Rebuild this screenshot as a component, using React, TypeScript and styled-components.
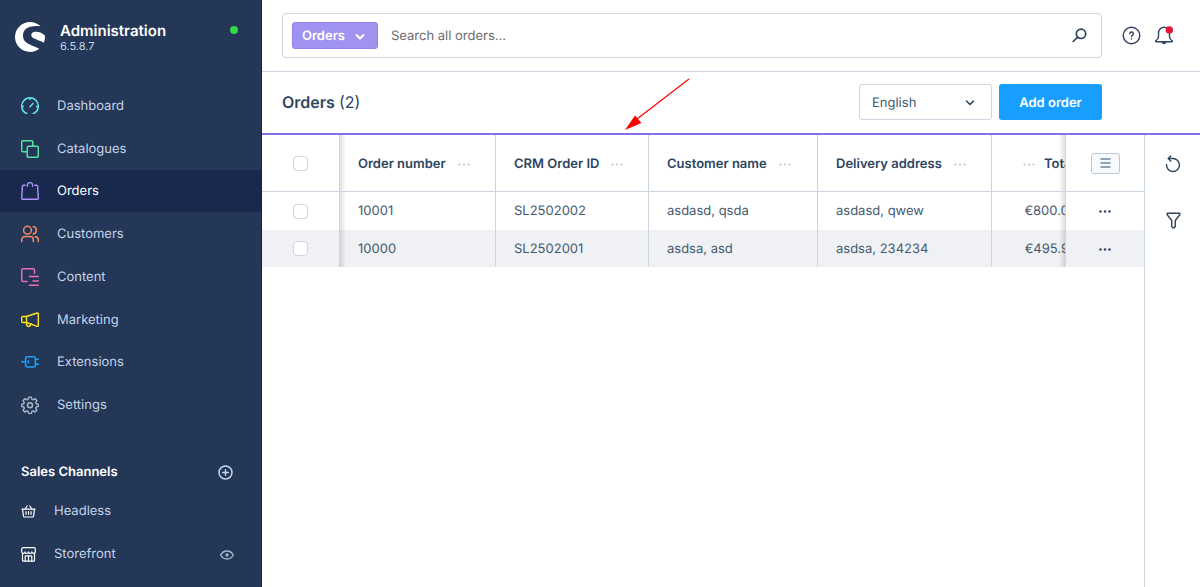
import React from "react";
import styled, { createGlobalStyle, css } from "styled-components";
import { SiShopware } from "react-icons/si";

const color = {
  nav: "#243757",
  navActive: "#19294d",
  navEdge: "#12224a",
  navText: "#c3d4ea",
  line: "#cbd6e0",
  text: "#44596f",
  heading: "#2d455f",
  purple: "#8473e8",
  blue: "#189eff",
};

const GlobalStyle = createGlobalStyle`
  *, *::before, *::after { box-sizing: border-box; }
  body {
    margin: 0;
    font-family: Inter, "Liberation Sans", sans-serif;
    font-size: 13px;
    line-height: 18px;
    color: ${color.text};
    background: #fff;
    text-rendering: geometricPrecision;
  }
  button, input, select { font: inherit; color: inherit; text-rendering: inherit; }
  button { padding: 0; border: 0; background: none; cursor: pointer; }
  ul { margin: 0; padding: 0; list-style: none; }
  h1, h2, p { margin: 0; }
  svg { display: block; flex: none; }
`;

const Shell = styled.div`
  display: grid;
  grid-template-columns: 262px minmax(0, 1fr);
  min-height: 100vh;
`;

/* ---------- navigation ---------- */

const Sidebar = styled.aside`
  display: flex;
  flex-direction: column;
  background: ${color.nav};
  border-right: 1px solid ${color.navEdge};
`;

const Brand = styled.header`
  display: flex;
  align-items: flex-start;
  height: 84px;
  padding: 22px 23px 0 15px;
  color: #fff;
`;

const BrandText = styled.div`
  flex: 1;
  margin-left: 15px;
`;

const BrandName = styled.p`
  font-size: 15px;
  font-weight: 600;
  line-height: 18px;
`;

const Version = styled.p`
  font-size: 11px;
  line-height: 13px;
  color: ${color.navText};
`;

const StatusDot = styled.span`
  width: 8px;
  height: 8px;
  margin-top: 4px;
  border-radius: 50%;
  background: #36d64a;
`;

const MainMenu = styled.ul`
  display: grid;
  grid-auto-rows: 1fr;
  height: 342px;
`;

const MenuLink = styled.a<{ $active?: boolean }>`
  display: flex;
  align-items: center;
  gap: 18px;
  height: 100%;
  padding: 1px 21px 0;
  text-decoration: none;
  color: ${(p) => (p.$active ? "#fff" : color.navText)};
  background: ${(p) => (p.$active ? color.navActive : "transparent")};
`;

const ChannelHeader = styled.div`
  display: flex;
  align-items: center;
  justify-content: space-between;
  margin-top: 37px;
  padding: 0 28px 0 21px;
  color: ${color.navText};
`;

const ChannelTitle = styled.h2`
  font-size: 13px;
  font-weight: 600;
  line-height: 18px;
  color: #fff;
`;

const ChannelList = styled.ul`
  margin-top: 8px;
`;

const ChannelItem = styled.li`
  display: flex;
  align-items: center;
  height: 43px;
  padding-right: 27px;
  color: ${color.navText};

  a {
    flex: 1;
  }
`;

/* ---------- top bar ---------- */

const Main = styled.main`
  display: flex;
  flex-direction: column;
  min-width: 0;
`;

const TopBar = styled.div`
  display: flex;
  align-items: center;
  padding: 13px 26px 13px 20px;
  border-bottom: 1px solid ${color.line};
  color: ${color.heading};
`;

const SearchBox = styled.form`
  flex: 1;
  display: flex;
  align-items: center;
  height: 45px;
  padding: 0 14px 0 9px;
  margin-right: 20px;
  border: 1px solid ${color.line};
  border-radius: 4px;
`;

const TypeButton = styled.button`
  display: flex;
  align-items: center;
  justify-content: space-between;
  width: 86px;
  height: 27px;
  padding: 0 12px 0 9px;
  border: 1px solid #9482f0;
  border-radius: 3px;
  background: #a092f0;
  color: #fff;
  font-weight: 600;
`;

const SearchInput = styled.input`
  flex: 1;
  min-width: 0;
  height: 40px;
  padding: 0 13px;
  border: 0;
  outline: 0;
  background: none;
  &::placeholder {
    color: #6b6b6b;
    opacity: 1;
  }
`;

const TopActions = styled.div`
  display: flex;
  align-items: center;
  gap: 13px;
`;

/* ---------- page header ---------- */

const PageHeader = styled.header`
  position: relative;
  display: flex;
  align-items: flex-start;
  gap: 7px;
  padding: 12px 98px 13px 20px;
  border-bottom: 2px solid ${color.purple};
`;

const PageTitle = styled.h1`
  flex: 1;
  font-size: 16px;
  line-height: 36px;
  font-weight: 600;
  color: ${color.heading};

  span {
    font-weight: 400;
  }
`;

const SelectWrap = styled.label`
  display: grid;
  align-items: center;
  width: 133px;

  > * {
    grid-area: 1 / 1;
  }
  > svg {
    justify-self: end;
    margin-right: 17px;
    pointer-events: none;
    color: ${color.heading};
  }
`;

const LanguageSelect = styled.select`
  appearance: none;
  width: 100%;
  height: 36px;
  padding: 1px 12px 0;
  border: 1px solid ${color.line};
  border-radius: 3px;
  background: #fff;
`;

const PrimaryButton = styled.button`
  width: 103px;
  height: 36px;
  padding-top: 1px;
  border-radius: 3px;
  background: ${color.blue};
  color: #fff;
  font-weight: 600;
`;

const Pointer = styled.svg`
  position: absolute;
  left: 360px;
  top: 4px;
  z-index: 3;
  pointer-events: none;
`;

/* ---------- grid ---------- */

const Content = styled.div`
  flex: 1;
  display: grid;
  grid-template-columns: minmax(0, 1fr) 56px;
`;

const GridScroller = styled.div`
  overflow-x: auto;
  scrollbar-width: none;
`;

const Grid = styled.table`
  width: 100%;
  min-width: 911px;
  table-layout: fixed;
  border-collapse: separate;
  border-spacing: 0;
`;

type CellProps = { $sticky?: "left" | "right"; $end?: boolean };

const cell = css<CellProps>`
  padding: 0 18px;
  border-right: 1px solid ${color.line};
  text-align: ${(p) => (p.$end ? "right" : "left")};
  white-space: nowrap;
  background: inherit;

  ${(p) =>
    p.$sticky &&
    css`
      position: sticky;
      ${p.$sticky}: 0;
      z-index: 1;
      padding: 0;
      ${p.$sticky === "right" &&
      css`
        border-right: 0;
        border-left: 1px solid ${color.line};
      `}

      &::after {
        content: "";
        position: absolute;
        top: 0;
        bottom: 0;
        width: 6px;
        ${p.$sticky === "left" ? "left" : "right"}: 100%;
        ${p.$sticky === "left" ? "margin-left: 1px" : "margin-right: 1px"};
        background: linear-gradient(
          to ${p.$sticky === "left" ? "right" : "left"},
          rgba(0, 0, 0, 0.12),
          transparent
        );
      }

      > * {
        display: flex;
        align-items: center;
        justify-content: center;
        margin: 0 auto;
      }
    `}
`;

const HeadCell = styled.th<CellProps>`
  ${cell}
  height: 57px;
  border-bottom: 1px solid ${color.line};
  font-weight: 600;
  color: ${color.heading};
`;

const BodyCell = styled.td<CellProps>`
  ${cell}
  height: 38px;
  ${(p) => p.$end && "padding-right: 16px;"}
`;

const Row = styled.tr`
  background: #fff;

  tbody &:nth-child(even) {
    background: #eff1f5;
  }
  tbody &:nth-child(even) td {
    height: 37px;
  }
`;

const HeadLabel = styled.span<{ $end?: boolean }>`
  display: flex;
  flex-direction: ${(p) => (p.$end ? "row-reverse" : "row")};
  align-items: center;
  gap: ${(p) => (p.$end ? 9 : 12)}px;
  padding-top: 2px;
  color: ${color.heading};

  button {
    color: #b3c3d5;
  }
`;

const Checkbox = styled.input`
  appearance: none;
  width: 15px;
  height: 15px;
  border: 1px solid ${color.line};
  border-radius: 4px;
  background: #fff;
`;

const ColumnsButton = styled.button`
  width: 29px;
  height: 21px;
  border: 1px solid #bac8d8;
  border-radius: 3px;
  background: #f9fafb;
  color: #6c86a2;
`;

const RowMenuButton = styled.button`
  width: 28px;
  height: 20px;
  color: ${color.heading};
`;

const ToolRail = styled.aside`
  display: flex;
  flex-direction: column;
  align-items: center;
  gap: 38px;
  padding: 20px 0 0 1px;
  border-left: 1px solid ${color.line};
  color: ${color.heading};
`;

/* ---------- icons ---------- */

type IconProps = {
  size?: number;
  height?: number;
  box?: string;
  stroke?: string;
  width?: number;
  children: React.ReactNode;
};

const Icon = ({ size = 18, height, box, stroke = "currentColor", width = 1.3, children }: IconProps) => (
  <svg
    width={size}
    height={height ?? size}
    viewBox={box ?? `0 0 ${size} ${height ?? size}`}
    fill="none"
    stroke={stroke}
    strokeWidth={width}
    strokeLinecap="round"
    strokeLinejoin="round"
    aria-hidden="true"
  >
    {children}
  </svg>
);

const Chevron = ({ width = 1.8 }: { width?: number }) => (
  <Icon size={10} width={width}>
    <path d="M1.500 4 5 7.500 8.500 4" />
  </Icon>
);

const Dots = ({ size = 12, r = 1 }: { size?: number; r?: number }) => (
  <svg width={size} height="4" viewBox="0 0 12 4" fill="currentColor" aria-hidden="true">
    <circle cx="1.500" cy="2.500" r={r} />
    <circle cx="6" cy="2.500" r={r} />
    <circle cx="10.500" cy="2.500" r={r} />
  </svg>
);

const menu = [
  {
    label: "Dashboard",
    icon: (
      <Icon stroke="#5fe3ee" width={1.5}>
        <path d="M5.800 16.200H4.600A8.300 8.300 0 1 1 13.400 16.200H12.200" />
        <path d="M9 .9v1.500M.9 9.500h1.500M15.600 9.500h1.500M9 9.800 12 6.400" />
      </Icon>
    ),
  },
  {
    label: "Catalogues",
    icon: (
      <Icon stroke="#54e3a0" width={1.5}>
        <rect x="6.200" y="6.200" width="11.100" height="11.100" rx="1.400" />
        <path d="M6 11.800H2A1.300 1.300 0 0 1 .7 10.500V2A1.300 1.300 0 0 1 2 .7h8.500A1.300 1.300 0 0 1 11.800 2v4" />
      </Icon>
    ),
  },
  {
    label: "Orders",
    active: true,
    icon: (
      <Icon stroke="#a894fa" width={1.4}>
        <path d="M4.300 3.200H2.600a1.200 1.200 0 0 0-1.200 1.200L.7 16a1.200 1.200 0 0 0 1.200 1.300h14.200a1.200 1.200 0 0 0 1.200-1.300l-.7-11.600a1.200 1.200 0 0 0-1.200-1.200h-1.700" />
        <path d="M6.400 4.300V3.200a2.600 2.600 0 0 1 5.200 0v1.100" />
      </Icon>
    ),
  },
  {
    label: "Customers",
    icon: (
      <Icon stroke="#f88962" width={1.5}>
        <circle cx="6.500" cy="5.200" r="3.900" />
        <path d="M.7 16.600v-1.800a3.200 3.200 0 0 1 3.200-3.200h5.200a3.200 3.200 0 0 1 3.200 3.200v1.800M12.300 1.400a3.900 3.900 0 0 1 0 7.600M14.200 11.700a3.200 3.200 0 0 1 3.100 3.100v1.800" />
      </Icon>
    ),
  },
  {
    label: "Content",
    icon: (
      <Icon stroke="#f06bb2" width={1.5}>
        <path d="M6 13.500H2.200A1.500 1.500 0 0 1 .7 12V2.200A1.500 1.500 0 0 1 2.200.7H12a1.500 1.500 0 0 1 1.500 1.500v3" />
        <path d="M8.500 8.500h8.800M12 12.900h5.300M8.500 17.200h8.800" />
      </Icon>
    ),
  },
  {
    label: "Marketing",
    icon: (
      <Icon stroke="#ffe51a" width={1.4}>
        <path d="M5.500 5.500 16.200 2a.8.8 0 0 1 1.100.8v11.700a.8.8 0 0 1-1.100.8L5.500 11.500Z" />
        <path d="M5.500 5.500H1.900A1.200 1.200 0 0 0 .7 6.700v3.600a1.200 1.200 0 0 0 1.200 1.200h3.600M5.600 11.600v1.600a2 2 0 0 0 4 .5l.3-.7" />
      </Icon>
    ),
  },
  {
    label: "Extensions",
    icon: (
      <Icon stroke="#1fa0fa" width={1.5}>
        <rect x="4.600" y="3.700" width="9.800" height="10.200" rx="2" />
        <path d="M.7 8.800h3.900M14.400 6.300h3M14.400 11.300h3M7.400 7.800v2" />
      </Icon>
    ),
  },
  {
    label: "Settings",
    icon: (
      <Icon stroke="#a9b9c8" box="0 0 24 24" width={1.9}>
        <path d="M10.300 1.500h3.400l.8 3 1.600.7 2.700-1.600 2.400 2.400-1.600 2.700.7 1.600 3 .8v2.800l-3 .8-.7 1.600 1.600 2.700-2.400 2.400-2.700-1.600-1.600.7-.8 3h-3.400l-.8-3-1.600-.7-2.700 1.600L2.800 19l1.600-2.700-.7-1.600-3-.8v-2.800l3-.8.7-1.600L2.800 6l2.400-2.400 2.700 1.600 1.600-.7Z" />
        <circle cx="12" cy="12.400" r="3.300" />
      </Icon>
    ),
  },
];

const BasketIcon = () => (
  <Icon size={15} stroke="#fff" width={1.2}>
    <path d="M.9 5.200h13.200M1.600 5.400l.8 6.500a1.200 1.200 0 0 0 1.200 1.100h7.800a1.200 1.200 0 0 0 1.200-1.100l.8-6.500M6.200 2 4 5M8.800 2 11 5M5 7.700v2.600M7.500 7.700v2.600M10 7.700v2.600" />
  </Icon>
);

const StoreIcon = () => (
  <Icon size={15} stroke="#fff" width={1.2}>
    <path d="M1.500 6.300v6.900a1 1 0 0 0 1 1h10a1 1 0 0 0 1-1V6.300M.7 4.500V2A1.300 1.300 0 0 1 2 .7h11A1.300 1.300 0 0 1 14.300 2v2.500a1.700 1.700 0 0 1-3.400.3 1.700 1.700 0 0 1-3.400 0 1.700 1.700 0 0 1-3.400 0A1.700 1.700 0 0 1 .7 4.500Z" />
    <path d="M4.200 14V9.500a.7.7 0 0 1 .7-.7h5.200a.7.7 0 0 1 .7.7V14M7.500 8.800V14" />
  </Icon>
);

const columns = ["Order number", "CRM Order ID", "Customer name", "Delivery address"];

const orders = [
  { number: "10001", crm: "SL2502002", customer: "asdasd, qsda", address: "asdasd, qwew", total: "€800.00" },
  { number: "10000", crm: "SL2502001", customer: "asdsa, asd", address: "asdsa, 234234", total: "€495.95" },
];

export default function App() {
  return (
    <>
      <GlobalStyle />
      <Shell>
        <Sidebar>
          <Brand>
            <SiShopware size={30} aria-hidden="true" />
            <BrandText>
              <BrandName>Administration</BrandName>
              <Version>6.5.8.7</Version>
            </BrandText>
            <StatusDot />
          </Brand>
          <nav aria-label="Main">
            <MainMenu>
              {menu.map((item) => (
                <li key={item.label}>
                  <MenuLink href="#" $active={item.active} aria-current={item.active ? "page" : undefined}>
                    {item.icon}
                    {item.label}
                  </MenuLink>
                </li>
              ))}
            </MainMenu>
          </nav>
          <ChannelHeader>
            <ChannelTitle>Sales Channels</ChannelTitle>
            <button type="button" aria-label="Add sales channel">
              <Icon size={15} width={1.5}>
                <circle cx="7.500" cy="7.500" r="6.500" />
                <path d="M7.500 4.700v5.600M4.700 7.500h5.600" />
              </Icon>
            </button>
          </ChannelHeader>
          <ChannelList>
            <ChannelItem>
              <MenuLink href="#">
                <BasketIcon />
                Headless
              </MenuLink>
            </ChannelItem>
            <ChannelItem>
              <MenuLink href="#">
                <StoreIcon />
                Storefront
              </MenuLink>
              <button type="button" aria-label="Open storefront">
                <Icon size={14} height={12} stroke="#a3b6cb" width={1.4}>
                  <path d="M.7 7C2 4.500 4.200 3 7 3s5 1.500 6.300 4C12 9.500 9.800 11 7 11S2 9.500.7 7Z" />
                  <circle cx="7" cy="7" r="1" fill="#a3b6cb" />
                </Icon>
              </button>
            </ChannelItem>
          </ChannelList>
        </Sidebar>

        <Main>
          <TopBar>
            <SearchBox role="search">
              <TypeButton type="button">
                Orders
                <Chevron width={2} />
              </TypeButton>
              <SearchInput type="search" placeholder="Search all orders..." aria-label="Search all orders" />
              <button type="submit" aria-label="Search">
                <Icon size={15} width={1.7}>
                  <circle cx="9" cy="5.800" r="4.700" />
                  <path d="M5.500 9.300 1.200 13.500" />
                </Icon>
              </button>
            </SearchBox>
            <TopActions>
              <button type="button" aria-label="Help">
                <Icon size={19} width={1.4}>
                  <circle cx="9.500" cy="9.500" r="8.300" />
                  <path d="M7.800 7.800a1.800 1.800 0 1 1 2.600 1.600c-.6.300-.9.600-.9 1.200M9.500 12.700v.2" />
                </Icon>
              </button>
              <button type="button" aria-label="Notifications">
                <Icon size={20} width={1.4}>
                  <path d="M2.200 15.800h15.600a.6.600 0 0 0 .3-1.100c-1.700-1-2.600-2.200-2.600-4.200V6.800a5.500 5.500 0 0 0-11 0v3.700c0 2-.9 3.200-2.600 4.200a.6.600 0 0 0 .3 1.100ZM8.200 16.200a1.900 1.900 0 0 0 3.600 0" />
                  <circle cx="15.300" cy="3.900" r="3.700" fill="#e3173e" stroke="none" />
                </Icon>
              </button>
            </TopActions>
          </TopBar>

          <PageHeader>
            <PageTitle>
              Orders <span>(2)</span>
            </PageTitle>
            <SelectWrap>
              <LanguageSelect aria-label="Language" defaultValue="en">
                <option value="en">English</option>
                <option value="de">Deutsch</option>
              </LanguageSelect>
              <Chevron width={1.6} />
            </SelectWrap>
            <PrimaryButton type="button">Add order</PrimaryButton>
            <Pointer width="70" height="58" viewBox="0 0 70 58" aria-hidden="true">
              <path d="M67 3 15 43" stroke="#f00" strokeWidth="1.200" />
              <path d="M3 54 13 39.500 19.500 47Z" fill="#f00" />
            </Pointer>
          </PageHeader>

          <Content>
            <GridScroller>
              <Grid>
                <colgroup>
                  <col width="78" />
                  <col width="156" />
                  <col width="153" />
                  <col width="169" />
                  <col width="174" />
                  <col width="102" />
                  <col width="79" />
                </colgroup>
                <thead>
                  <Row>
                    <HeadCell $sticky="left">
                      <Checkbox type="checkbox" aria-label="Select all orders" />
                    </HeadCell>
                    {columns.map((name) => (
                      <HeadCell key={name}>
                        <HeadLabel>
                          {name}
                          <button type="button" aria-label={`${name} options`}>
                            <Dots />
                          </button>
                        </HeadLabel>
                      </HeadCell>
                    ))}
                    <HeadCell $end>
                      <HeadLabel $end>
                        Total
                        <button type="button" aria-label="Total options">
                          <Dots />
                        </button>
                      </HeadLabel>
                    </HeadCell>
                    <HeadCell $sticky="right">
                      <ColumnsButton type="button" aria-label="Grid settings">
                        <Icon size={11} height={10} width={1.5}>
                          <path d="M1 1h9M1 5h9M1 9h9" />
                        </Icon>
                      </ColumnsButton>
                    </HeadCell>
                  </Row>
                </thead>
                <tbody>
                  {orders.map((order) => (
                    <Row key={order.number}>
                      <BodyCell $sticky="left">
                        <Checkbox type="checkbox" aria-label={`Select order ${order.number}`} />
                      </BodyCell>
                      <BodyCell>{order.number}</BodyCell>
                      <BodyCell>{order.crm}</BodyCell>
                      <BodyCell>{order.customer}</BodyCell>
                      <BodyCell>{order.address}</BodyCell>
                      <BodyCell $end>{order.total}</BodyCell>
                      <BodyCell $sticky="right">
                        <RowMenuButton type="button" aria-label={`Order ${order.number} actions`}>
                          <Dots r={1.2} />
                        </RowMenuButton>
                      </BodyCell>
                    </Row>
                  ))}
                </tbody>
              </Grid>
            </GridScroller>
            <ToolRail>
              <button type="button" aria-label="Refresh">
                <Icon size={16} height={19} width={1.4}>
                  <path d="M1.500 9.500a6.500 6.500 0 1 0 6.500-6H3.300M5.700 1 3.200 3.500l2.500 2.500" />
                </Icon>
              </button>
              <button type="button" aria-label="Filter">
                <Icon size={15} height={17} width={1.4}>
                  <path d="M1.200 1.200h12.600v1.500L9.300 8.500v6l-1.200 1.300H6.900l-1.200-1.300v-6L1.200 2.700Z" />
                </Icon>
              </button>
            </ToolRail>
          </Content>
        </Main>
      </Shell>
    </>
  );
}
